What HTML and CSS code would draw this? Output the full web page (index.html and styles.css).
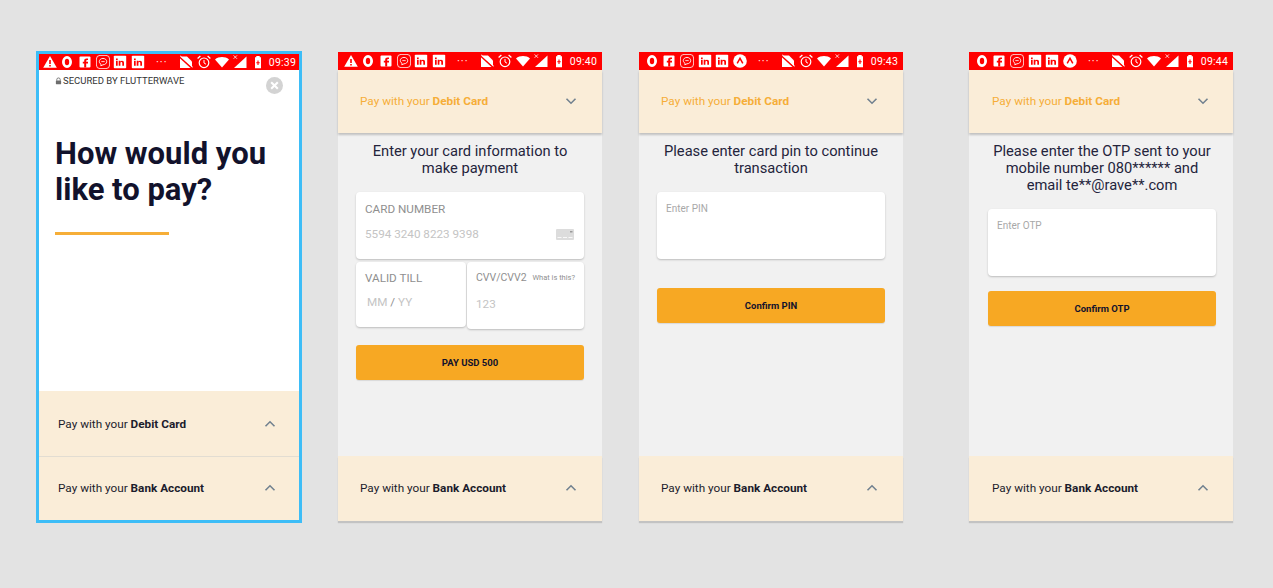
FILE: index.html
```html
<!DOCTYPE html>
<html lang="en">
<head>
  <meta charset="UTF-8" />
  <meta name="viewport" content="width=device-width, initial-scale=1.0" />
  <title>Flutterwave payment flow</title>
  <link rel="stylesheet" href="styles.css">
</head>

<body>
  <!-- shared status bar and chevron icons -->
  <svg class="sprite" aria-hidden="true">
    <symbol id="i-warn" viewBox="0 0 14 14"><path d="M7 1 13.800 12.800H.2z" fill="#fff"/><path d="M6.200 5h1.600v4H6.200zM6.200 9.900h1.600v1.500H6.200z" fill="#f00"/></symbol>
    <symbol id="i-opera" viewBox="0 0 14 14"><ellipse cx="7" cy="7" rx="3.600" ry="4.600" fill="none" stroke="#fff" stroke-width="2.800"/></symbol>
    <symbol id="i-fb" viewBox="0 0 14 14"><rect x="1.500" y="1.500" width="11" height="11" rx="1" fill="#fff"/><path d="M8.200 12.500V8.400H10V6.800H8.200V5.900c0-.6.3-.9.9-.9H10V3.400H8.600C7.100 3.400 6.200 4.300 6.200 5.700v1.100H4.800v1.600h1.400v4.100z" fill="#f00"/></symbol>
    <symbol id="i-insta" viewBox="0 0 14 14"><rect x=".4" y=".4" width="13.200" height="13.200" rx="3.600" fill="none" stroke="#fff" stroke-width=".8"/><path d="M7 3.400c2.100 0 3.700 1.400 3.700 3.200S9.100 9.800 7 9.800l-2.200 1 .2-1.600C4 8.600 3.300 7.700 3.300 6.600c0-1.800 1.600-3.200 3.700-3.200z" fill="none" stroke="#fff" stroke-width=".9"/><path d="M5.300 6.600h3.400" stroke="#fff" stroke-width=".8"/></symbol>
    <symbol id="i-linkedin" viewBox="0 0 14 14"><rect x=".8" y=".8" width="12.400" height="12.400" rx=".8" fill="#fff"/><path d="M3 5.800h1.700v5H3zM3 3.400h1.700v1.500H3zM5.700 5.800h1.600v.8c.4-.6 1-.9 1.700-.9 1.300 0 2 .8 2 2.300v2.800H9.300V8.300c0-.8-.3-1.200-.9-1.200s-1 .4-1 1.200v2.500H5.700z" fill="#f00"/></symbol>
    <symbol id="i-arrow" viewBox="0 0 14 14"><circle cx="7" cy="7" r="6.800" fill="#fff"/><path d="M4.200 9.400 7 4.400l2.800 5" fill="none" stroke="#f00" stroke-width="1.500"/></symbol>
    <symbol id="i-nosim" viewBox="0 0 14 14"><path d="M1 1.500H8l5 5V13H1z" fill="#fff"/><path d="M0 1.600 13.500 13.800" stroke="#f00" stroke-width="1.500"/><path d="M1.200 .8 14 12.400" stroke="#fff" stroke-width=".8"/></symbol>
    <symbol id="i-alarm" viewBox="0 0 14 14"><circle cx="7" cy="7.800" r="4.800" fill="none" stroke="#fff" stroke-width="1.200"/><path d="M7 5v3l2 1.200" fill="none" stroke="#fff"/><path d="M.6 3.400 3.400 1M13.400 3.400 10.600 1" stroke="#fff" stroke-width="1.300"/></symbol>
    <symbol id="i-wifi" viewBox="0 0 14 14"><path d="M0 4.400C3.800 1.200 10.200 1.200 14 4.400L7 12.400z" fill="#fff"/></symbol>
    <symbol id="i-signal" viewBox="0 0 14 14"><path d="M1 13 13.500 1.500V13z" fill="#fff"/><path d="M.6.4 4 3.800M4 .4.600 3.800" stroke="#fff" stroke-width=".8"/></symbol>
    <symbol id="i-battery" viewBox="0 0 14 14"><path d="M5.300 1h3.400v1.300h1.300v10.900H4V2.300h1.300z" fill="#fff"/><path d="M7 5.500v4.500M5.300 7.700h3.400" stroke="#f00" stroke-width="1.100"/></symbol>
    <symbol id="i-up" viewBox="0 0 12 8"><path d="M1.500 6.200 6 1.800l4.500 4.400" fill="none" stroke="#71818f" stroke-width="1.600"/></symbol>
    <symbol id="i-down" viewBox="0 0 12 8"><path d="M1.500 1.800 6 6.200l4.500-4.400" fill="none" stroke="#71818f" stroke-width="1.600"/></symbol>
    <symbol id="i-lock" viewBox="0 0 8 8"><path d="M2 3.600V2.500a2 2 0 0 1 4 0v1.100" fill="none" stroke="#6d6d6d"/><rect x="1" y="3.500" width="6" height="4.200" rx=".5" fill="#6d6d6d"/></symbol>
  </svg>

  <main class="stage">

    <section class="screen screen-select">
      <div class="status">
        <svg class="ico"><use href="#i-warn"/></svg>
        <svg class="ico"><use href="#i-opera"/></svg>
        <svg class="ico"><use href="#i-fb"/></svg>
        <svg class="ico"><use href="#i-insta"/></svg>
        <svg class="ico"><use href="#i-linkedin"/></svg>
        <svg class="ico"><use href="#i-linkedin"/></svg>
        <span class="dots">···</span>
        <svg class="ico ico-r"><use href="#i-nosim"/></svg>
        <svg class="ico ico-r"><use href="#i-alarm"/></svg>
        <svg class="ico ico-r"><use href="#i-wifi"/></svg>
        <svg class="ico ico-r"><use href="#i-signal"/></svg>
        <svg class="ico ico-r"><use href="#i-battery"/></svg>
        <span class="clock">09:39</span>
      </div>
      <div class="intro">
        <div class="secure-row">
          <p class="secure"><svg class="lock"><use href="#i-lock"/></svg>SECURED BY FLUTTERWAVE</p>
          <span class="close">
            <svg viewBox="0 0 18 18"><path d="M5.500 5.500l7 7M12.500 5.500l-7 7" stroke="#fff" stroke-width="2.200"/></svg>
          </span>
        </div>
        <h1>How would you like to pay?</h1>
        <div class="rule"></div>
      </div>
      <div class="row row-divided">
        <span>Pay with your <b>Debit Card</b></span>
        <svg class="chev"><use href="#i-up"/></svg>
      </div>
      <div class="row row-bank">
        <span>Pay with your <b>Bank Account</b></span>
        <svg class="chev"><use href="#i-up"/></svg>
      </div>
    </section>

    <section class="screen screen-card">
      <div class="status">
        <svg class="ico"><use href="#i-warn"/></svg>
        <svg class="ico"><use href="#i-opera"/></svg>
        <svg class="ico"><use href="#i-fb"/></svg>
        <svg class="ico"><use href="#i-insta"/></svg>
        <svg class="ico"><use href="#i-linkedin"/></svg>
        <svg class="ico"><use href="#i-linkedin"/></svg>
        <span class="dots">···</span>
        <svg class="ico ico-r"><use href="#i-nosim"/></svg>
        <svg class="ico ico-r"><use href="#i-alarm"/></svg>
        <svg class="ico ico-r"><use href="#i-wifi"/></svg>
        <svg class="ico ico-r"><use href="#i-signal"/></svg>
        <svg class="ico ico-r"><use href="#i-battery"/></svg>
        <span class="clock">09:40</span>
      </div>
      <div class="row row-open">
        <span>Pay with your <b>Debit Card</b></span>
        <svg class="chev"><use href="#i-down"/></svg>
      </div>
      <div class="body">
        <h2>Enter your card information to make payment</h2>
        <div class="field field-number">
          <label>CARD NUMBER</label>
          <div class="number-line">
            <span class="hint">5594 3240 8223 9398</span>
            <svg class="card-ico" viewBox="0 0 18 11"><rect width="18" height="11" rx="1" fill="#dcdcdc"/><rect x="14" y="2" width="2.500" height="1.500" fill="#9a9a9a"/><path d="M1.500 8.500h4M7 8.500h4M12.500 8.500h4" stroke="#fff" stroke-width=".8"/></svg>
          </div>
        </div>
        <div class="split">
          <div class="field field-till">
            <label>VALID TILL</label>
            <span class="hint hint-date">MM <i>/</i> YY</span>
          </div>
          <div class="field field-cvv">
            <div class="cvv-head">
              <label>CVV/CVV2</label>
              <small>What is this?</small>
            </div>
            <span class="hint">123</span>
          </div>
        </div>
        <button class="pay pay-card">PAY USD 500</button>
      </div>
      <div class="row row-bank">
        <span>Pay with your <b>Bank Account</b></span>
        <svg class="chev"><use href="#i-up"/></svg>
      </div>
    </section>

    <section class="screen screen-pin">
      <div class="status">
        <svg class="ico"><use href="#i-opera"/></svg>
        <svg class="ico"><use href="#i-fb"/></svg>
        <svg class="ico"><use href="#i-insta"/></svg>
        <svg class="ico"><use href="#i-linkedin"/></svg>
        <svg class="ico"><use href="#i-linkedin"/></svg>
        <svg class="ico"><use href="#i-arrow"/></svg>
        <span class="dots">···</span>
        <svg class="ico ico-r"><use href="#i-nosim"/></svg>
        <svg class="ico ico-r"><use href="#i-alarm"/></svg>
        <svg class="ico ico-r"><use href="#i-wifi"/></svg>
        <svg class="ico ico-r"><use href="#i-signal"/></svg>
        <svg class="ico ico-r"><use href="#i-battery"/></svg>
        <span class="clock">09:43</span>
      </div>
      <div class="row row-open">
        <span>Pay with your <b>Debit Card</b></span>
        <svg class="chev"><use href="#i-down"/></svg>
      </div>
      <div class="body">
        <h2>Please enter card pin to continue transaction</h2>
        <div class="field field-code"><span class="code-label">Enter PIN</span></div>
        <button class="pay pay-pin">Confirm PIN</button>
      </div>
      <div class="row row-bank">
        <span>Pay with your <b>Bank Account</b></span>
        <svg class="chev"><use href="#i-up"/></svg>
      </div>
    </section>

    <section class="screen screen-otp">
      <div class="status">
        <svg class="ico"><use href="#i-opera"/></svg>
        <svg class="ico"><use href="#i-fb"/></svg>
        <svg class="ico"><use href="#i-insta"/></svg>
        <svg class="ico"><use href="#i-linkedin"/></svg>
        <svg class="ico"><use href="#i-linkedin"/></svg>
        <svg class="ico"><use href="#i-arrow"/></svg>
        <span class="dots">···</span>
        <svg class="ico ico-r"><use href="#i-nosim"/></svg>
        <svg class="ico ico-r"><use href="#i-alarm"/></svg>
        <svg class="ico ico-r"><use href="#i-wifi"/></svg>
        <svg class="ico ico-r"><use href="#i-signal"/></svg>
        <svg class="ico ico-r"><use href="#i-battery"/></svg>
        <span class="clock">09:44</span>
      </div>
      <div class="row row-open">
        <span>Pay with your <b>Debit Card</b></span>
        <svg class="chev"><use href="#i-down"/></svg>
      </div>
      <div class="body">
        <h2>Please enter the OTP sent to your mobile number 080****** and email te**@rave**.com</h2>
        <div class="field field-code"><span class="code-label">Enter OTP</span></div>
        <button class="pay pay-otp">Confirm OTP</button>
      </div>
      <div class="row row-bank">
        <span>Pay with your <b>Bank Account</b></span>
        <svg class="chev"><use href="#i-up"/></svg>
      </div>
    </section>

  </main>
</body>
</html>
```

FILE: styles.css
```css
* {
  margin: 0;
  padding: 0;
  box-sizing: border-box;
}

html, body {
  height: 100%;
}

body {
  background: #e3e3e3;
  font-family: Roboto, "Liberation Sans", sans-serif;
  color: #12122c;
  overflow: hidden;
}

.sprite {
  display: none;
}

.stage {
  display: flex;
  align-items: flex-start;
  padding: 52px 0 0 36px;
}

.screen {
  width: 264px;
  height: 469px;
  flex: none;
  display: flex;
  flex-direction: column;
  background: #f1f1f1;
}

.screen-select {
  width: 266px;
  height: 472px;
  margin: -1px 36px 0 0;
  border: 3px solid #3dbdf7;
  background: #fff;
}

.screen-card {
  margin-right: 37px;
}

.screen-pin {
  margin-right: 66px;
}

/* status bar */
.status {
  height: 18px;
  flex: none;
  display: flex;
  align-items: center;
  background: #f00;
  padding: 0 5px 0 4px;
  color: #fff;
}

.screen-select .status {
  height: 16px;
  padding: 0 3px 0 2px;
}

.ico {
  width: 14px;
  height: 14px;
  margin: 0 1.800px;
  flex: none;
}

.ico-r {
  margin: 0 2px;
}

.dots {
  flex: 1;
  text-align: center;
  font-size: 11px;
  line-height: 1;
  letter-spacing: 1px;
}

.clock {
  font-size: 10.500px;
  margin-left: 2px;
  letter-spacing: 0.2px;
}

/* accordion rows */
.row {
  flex: none;
  display: flex;
  align-items: center;
  justify-content: space-between;
  background: #faedd8;
  padding: 0 25px 1px 22px;
  font-size: 11.750px;
  color: #1c1c2c;
}

.row b {
  font-weight: 700;
}

.chev {
  width: 12px;
  height: 8px;
}

.row-open {
  height: 63px;
  color: #f6ae38;
  box-shadow: 0 2px 2px rgba(0, 0, 0, 0.2);
  position: relative;
}

.row-bank {
  height: 65px;
  box-shadow: 0 2px 1px rgba(0, 0, 0, 0.14);
}

.row-divided {
  height: 66px;
  border-bottom: 1px solid #e2ddd2;
  padding: 0 23px 0 19px;
}

.screen-select .row-bank {
  height: 63px;
  padding: 0 23px 1px 19px;
  box-shadow: none;
}

.screen-otp .row {
  padding-left: 23px;
  padding-right: 24px;
}

/* intro screen */
.intro {
  flex: 1;
  padding: 2px 16.500px 0 16px;
}

.secure-row {
  display: flex;
  justify-content: space-between;
  align-items: flex-start;
}

.secure {
  display: flex;
  align-items: center;
  font-size: 9.500px;
  line-height: 18px;
  color: #333;
}

.lock {
  width: 7px;
  height: 8px;
  margin-right: 1px;
}

.close {
  width: 17px;
  height: 17px;
  margin-top: 4.500px;
  border-radius: 50%;
  background: #d3d3d3;
}

.close svg {
  display: block;
  width: 17px;
  height: 17px;
}

h1 {
  font-size: 31px;
  line-height: 36px;
  font-weight: 700;
  margin-top: 42.500px;
  width: 225px;
}

.rule {
  width: 114px;
  height: 3px;
  background: #f6ae38;
  margin-top: 24px;
}

/* form screens */
.body {
  flex: 1;
  padding: 10px 18px 0;
}

.screen-otp .body {
  padding: 10px 17px 0 19px;
}

h2 {
  font-size: 14.700px;
  line-height: 17px;
  font-weight: 400;
  text-align: center;
  color: #24243c;
  margin-bottom: 15px;
}

.screen-card h2 {
  padding: 0 6px;
}

.field {
  background: #fff;
  border-radius: 4px;
  box-shadow: 0 1px 2px rgba(0, 0, 0, 0.22);
}

.field label {
  display: block;
  font-size: 11.700px;
  color: #8f8f8f;
}

.hint {
  font-size: 11.700px;
  color: #c4c4c4;
}

.field-number {
  height: 67px;
  padding: 10px 10px 0 9px;
}

.number-line {
  display: flex;
  justify-content: space-between;
  align-items: center;
  margin-top: 11px;
}

.card-ico {
  width: 18px;
  height: 11px;
}

.split {
  display: flex;
  gap: 1px;
  margin-top: 3px;
}

.field-till {
  width: 110px;
  height: 65px;
  padding: 9px 10px 0 9px;
}

.hint-date {
  display: block;
  margin: 10px 0 0 2px;
}

.hint-date i {
  font-style: normal;
  color: #8f8f8f;
}

.field-cvv {
  flex: 1;
  height: 67px;
  padding: 9px 9px 0 9px;
}

.cvv-head {
  display: flex;
  justify-content: space-between;
  align-items: center;
  margin-bottom: 9px;
}

.field-cvv label {
  font-size: 10.500px;
}

.field-cvv small {
  font-size: 7.500px;
  color: #8f8f8f;
}

.field-code {
  height: 67px;
  padding: 5px 9px 0;
}

.code-label {
  font-size: 10px;
  color: #a8a8a8;
}

.pay {
  display: block;
  width: 100%;
  height: 35px;
  border: 0;
  border-radius: 3px;
  background: #f7a823;
  box-shadow: 0 1px 1px rgba(0, 0, 0, 0.1);
  font: 700 9.500px Roboto, "Liberation Sans", sans-serif;
  color: #12122c;
}

.pay-card {
  margin-top: 16px;
}

.pay-pin {
  margin-top: 29px;
}

.pay-otp {
  margin-top: 15px;
}
```
